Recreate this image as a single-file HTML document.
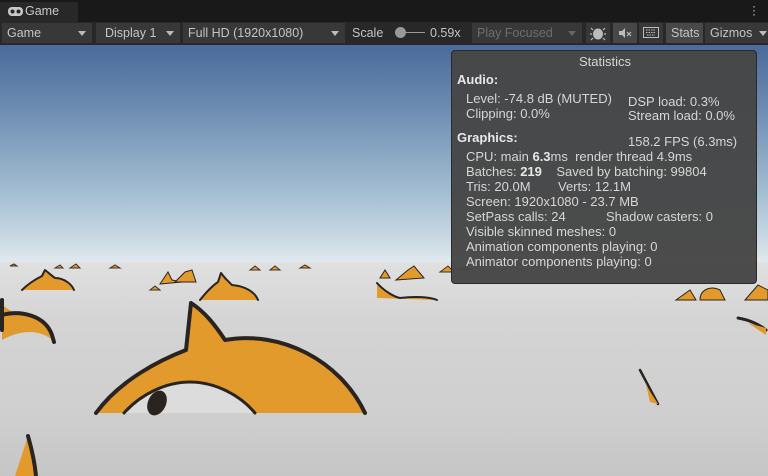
<!DOCTYPE html>
<html><head><style>
*{margin:0;padding:0;box-sizing:border-box}
body{width:768px;height:476px;overflow:hidden;background:#191919;font-family:"Liberation Sans",sans-serif;position:relative}
.a{position:absolute;white-space:nowrap}
#tabbar{left:0;top:0;width:768px;height:22px;background:#191919}
#tab{left:0;top:2px;width:78px;height:20px;background:#282828;color:#c8c8c8;font-size:12.5px;padding:2px 0 0 25px}
#tool{left:0;top:22px;width:768px;height:23px;background:#282828}
.dd{top:23px;height:20px;background:#383838;color:#c4c4c4;font-size:12.5px;padding:3px 5px}
.ar{position:absolute;right:6px;top:8px;border-left:4px solid transparent;border-right:4px solid transparent;border-top:5px solid #bbb}
.t{color:#c4c4c4;font-size:12.5px;top:26px}
#view{left:0;top:45px;width:768px;height:431px;background:linear-gradient(#4a6b9b 0px,#6a8ab0 60px,#a5bfd3 150px,#cfdde6 200px,#e0e9ee 217px)}
#ground{left:0;top:262px;width:768px;height:214px;background:linear-gradient(#e0e0e0,#d4d4d4 60px,#cfcfcf 150px,#c6c6c6)}
#stats{left:451px;top:50px;width:306px;height:234px;background:rgba(70,70,70,.97);border-radius:4px;border:1px solid #2a2a2a;color:#d6d6d6;font-size:13px}
#stats .a{line-height:15px}
b{font-weight:bold;color:#e8e8e8}
</style></head><body>
<div class="a" id="tabbar"></div>
<div class="a" id="tab">Game</div>
<svg class="a" style="left:8px;top:7px" width="15" height="9"><rect x="0" y="0" width="15" height="9" rx="4" fill="#c8c8c8"/><circle cx="4.5" cy="4.5" r="2" fill="#282828"/><circle cx="10.5" cy="4.5" r="2" fill="#282828"/></svg>
<div class="a" style="left:752px;top:4px;color:#ccc;font-size:12px;line-height:4px">·<br>·<br>·</div>
<div class="a" id="tool"></div>
<div class="a dd" style="left:2px;width:90px">Game<span class="ar"></span></div>
<div class="a dd" style="left:96px;width:84px;padding-left:9px">Display 1<span class="ar"></span></div>
<div class="a dd" style="left:183px;width:162px">Full HD (1920x1080)<span class="ar"></span></div>
<div class="a t" style="left:352px">Scale</div>
<div class="a" style="left:395px;top:27px;width:11px;height:11px;border-radius:50%;background:#999"></div>
<div class="a" style="left:405px;top:32px;width:20px;height:1px;background:#999"></div>
<div class="a t" style="left:430px">0.59x</div>
<div class="a dd" style="left:472px;width:110px;color:#6e6e6e">Play Focused<span class="ar" style="border-top-color:#666"></span></div>
<div class="a" style="left:586px;top:23px;width:24px;height:20px;background:#383838"></div>
<svg class="a" style="left:590px;top:25px" width="16" height="16"><ellipse cx="8" cy="9" rx="5" ry="5.5" fill="#bbb"/><path d="M3 5L1 3M13 5L15 3M2 9H0M14 9h2M3 13l-2 2M13 13l2 2" stroke="#bbb" stroke-width="1.2"/></svg>
<div class="a" style="left:613px;top:23px;width:24px;height:20px;background:#474747"></div>
<svg class="a" style="left:618px;top:27px" width="14" height="12"><path d="M1 4h3l3-3v10L4 8H1z" fill="#bbb"/><path d="M9 5l4 4M13 5l-4 4" stroke="#bbb" stroke-width="1.2"/></svg>
<div class="a" style="left:639px;top:23px;width:24px;height:20px;background:#383838"></div>
<svg class="a" style="left:643px;top:27px" width="16" height="11"><rect x="0.5" y="0.5" width="15" height="10" fill="none" stroke="#bbb"/><path d="M3 3h10M3 5.5h10M4 8h8" stroke="#bbb" stroke-dasharray="1.5 1"/></svg>
<div class="a dd" style="left:666px;width:37px;background:#484848">Stats</div>
<div class="a dd" style="left:705px;width:63px">Gizmos<span class="ar" style="right:1px"></span></div>
<div class="a" id="view"></div>
<div class="a" id="ground"></div>
<svg class="a" style="left:0;top:0" width="768" height="476">
<g fill="#e39a2c" stroke="none">
<path d="M96 413C120 380 160 360 186 350L191 303C205 312 215 325 225 340C280 330 340 360 365 413Z"/>
<path d="M2 340V305C10 310 15 315 20 315C35 315 48 325 55 342C40 328 20 330 2 340Z"/>
<path d="M22 290C30 282 38 278 42 276L45 270C50 274 52 276 55 278C65 278 72 285 74 290Z"/>
<path d="M200 300C208 290 215 284 218 282L221 273C226 280 230 283 232 285C245 286 255 292 258 300Z"/>
<path d="M377 298V283C385 292 395 297 400 298C415 296 430 297 437 300Z"/>
<path d="M15 476L28 436C32 450 35 465 36 476Z"/>
</g>
<path d="M124 413C140 395 165 382 190 382C215 382 240 395 255 413Z" fill="#dcdcdc"/>
<g stroke="#2a2420" fill="none" stroke-linejoin="round" stroke-linecap="round">
<path d="M96 413C120 380 160 360 186 350L191 303C205 312 215 325 225 340C280 330 340 360 365 413" stroke-width="4"/>
<path d="M124 413C140 395 165 382 190 382C215 382 240 395 255 413" stroke-width="3"/>
<path d="M2 300V330M2 315C20 310 45 315 52 335L54 342" stroke-width="4"/>
<path d="M22 290C30 282 38 278 42 276L45 270C50 274 52 276 55 278C65 278 72 285 74 290" stroke-width="2"/>
<path d="M200 300C208 290 215 284 218 282L221 273C226 280 230 283 232 285C245 286 255 292 258 300" stroke-width="2"/>
<path d="M377 283C385 292 395 297 400 298C415 296 430 297 437 300" stroke-width="2"/>
<path d="M28 436C32 450 35 465 36 476" stroke-width="4"/>
<path d="M640 370L658 404" stroke-width="2.5"/>
<path d="M738 318C750 320 760 325 766 330" stroke-width="3"/>
</g>
<g stroke="#2a2420" stroke-width="1" fill="#e39a2c">
<path d="M160 284L168 272L172 280L182 282Z"/>
<path d="M175 282L185 272L192 270L196 282Z"/>
<path d="M396 280L408 270L414 266L424 278Z"/>
<path d="M380 278L385 270L390 278Z"/>
<path d="M676 300L690 290L696 300Z"/>
<path d="M700 300C700 290 710 285 720 290L725 300Z"/>
<path d="M745 300L758 285L768 290V300Z"/>
<path d="M646 385L658 404L650 402Z" stroke="none"/>
<path d="M748 323L766 328V335Z" stroke="none"/>
</g>
<ellipse cx="157" cy="403" rx="9" ry="13" fill="#2a2420" transform="rotate(25 157 403)"/>
<g fill="#e39a2c" stroke="#3a302a" stroke-width="1">
<path d="M55 268l5-3 3 3z"/><path d="M70 268l6-4 4 4z"/><path d="M110 268l5-3 5 3z"/><path d="M250 270l5-4 5 4z"/><path d="M270 270l5-4 5 4z"/><path d="M300 268l5-3 5 3z"/><path d="M440 272l8-6 6 6z"/><path d="M460 270l5-4 5 4z"/><path d="M10 266l4-2 3 2z"/><path d="M150 290l5-4 5 4z"/>
</g>
</svg>
<div class="a" id="stats">
<div class="a" style="left:0;width:306px;text-align:center;top:3px">Statistics</div>
<div class="a" style="left:5px;top:21px"><b>Audio:</b></div>
<div class="a" style="left:14px;top:40px">Level: -74.8 dB (MUTED)</div>
<div class="a" style="left:14px;top:55px">Clipping: 0.0%</div>
<div class="a" style="left:176px;top:43px">DSP load: 0.3%</div>
<div class="a" style="left:176px;top:57px">Stream load: 0.0%</div>
<div class="a" style="left:5px;top:79px"><b>Graphics:</b></div>
<div class="a" style="left:176px;top:83px">158.2 FPS (6.3ms)</div>
<div class="a" style="left:14px;top:98px">CPU: main <b>6.3</b>ms&nbsp; render thread 4.9ms</div>
<div class="a" style="left:14px;top:113px">Batches: <b>219</b>&nbsp;&nbsp;&nbsp; Saved by batching: 99804</div>
<div class="a" style="left:14px;top:128px">Tris: 20.0M</div>
<div class="a" style="left:106px;top:128px">Verts: 12.1M</div>
<div class="a" style="left:14px;top:143px">Screen: 1920x1080 - 23.7 MB</div>
<div class="a" style="left:14px;top:158px">SetPass calls: 24</div>
<div class="a" style="left:154px;top:158px">Shadow casters: 0</div>
<div class="a" style="left:14px;top:173px">Visible skinned meshes: 0</div>
<div class="a" style="left:14px;top:188px">Animation components playing: 0</div>
<div class="a" style="left:14px;top:203px">Animator components playing: 0</div>
</div>
</body></html>
